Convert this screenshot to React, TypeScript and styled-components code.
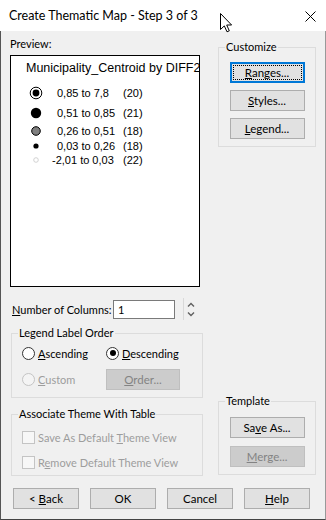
import styled, { createGlobalStyle, css } from "styled-components";

const GlobalStyle = createGlobalStyle`
  html, body {
    margin: 0;
    padding: 0;
    background: #f0f0f0;
  }
  body {
    width: 326px;
    height: 520px;
    overflow: hidden;
    font-family: Lato, "Liberation Sans", sans-serif;
    font-size: 11px;
    color: #000;
  }
  * {
    box-sizing: border-box;
  }
`;

const Window = styled.div`
  width: 326px;
  height: 520px;
  display: flex;
  flex-direction: column;
`;

const TitleBar = styled.div`
  position: relative;
  height: 31px;
  flex: none;
  display: flex;
  align-items: center;
  justify-content: space-between;
  padding: 0 10px 0 9px;
  background: #fff;
`;

const Title = styled.div`
  font-size: 12.5px;
  color: #000;
`;

const CloseIcon = styled.svg`
  width: 11px;
  height: 11px;
  margin-top: 1px;
`;

const Cursor = styled.svg`
  position: absolute;
  left: 220px;
  top: 13px;
  width: 13px;
  height: 20px;
`;

const Body = styled.div`
  flex: 1;
  display: flex;
  flex-direction: column;
  padding: 0 9px;
  background: #f0f0f0;
  border-left: 1px solid #555;
  border-right: 1px solid #999;
  border-bottom: 1px solid #444;
`;

const Main = styled.div`
  display: flex;
  gap: 14px;
`;

const LeftColumn = styled.div`
  width: 193px;
  display: flex;
  flex-direction: column;
`;

const RightColumn = styled.div`
  width: 99px;
  display: flex;
  flex-direction: column;
  justify-content: space-between;
  padding-bottom: 1px;
`;

const FieldLabel = styled.div`
  margin-top: 6px;
  line-height: 14px;
  height: 14px;
`;

const PreviewBox = styled.div`
  margin-top: 4px;
  width: 190px;
  height: 232px;
  background: #fff;
  border: 1px solid #000;
  overflow: hidden;
  padding: 5px 0 0 15px;
  font-family: "Liberation Sans", Arial, sans-serif;
`;

const PreviewTitle = styled.div`
  font-size: 12.5px;
  line-height: 14px;
  white-space: nowrap;
  margin-bottom: 7px;
`;

const LegendRow = styled.div<{ $h: number }>`
  height: ${(p) => p.$h}px;
  display: grid;
  grid-template-columns: 31px 66px auto;
  align-items: center;
  font-size: 11px;
  white-space: nowrap;
`;

const Symbol = styled.svg`
  width: 14px;
  height: 14px;
  margin-left: 3px;
`;

const RangeText = styled.span<{ $neg?: boolean }>`
  margin-left: ${(p) => (p.$neg ? "-5px" : "0")};
`;

const ColumnsRow = styled.div`
  margin-top: 11px;
  height: 22px;
  display: flex;
  align-items: center;
  padding-left: 2px;
`;

const ColumnsLabel = styled.label`
  width: 101px;
  flex: none;
  white-space: nowrap;
`;

const NumberInput = styled.div`
  width: 62px;
  height: 19px;
  flex: none;
  background: #fff;
  border: 1px solid #7a7a7a;
  padding-left: 4px;
  line-height: 17px;
`;

const Spinner = styled.div`
  margin-left: 8px;
  height: 22px;
  display: flex;
  align-items: center;
  border-left: 1px solid #d9d9d9;
  padding-left: 3px;
`;

const Group = styled.fieldset<{ $h: number; $mt: number }>`
  margin: ${(p) => p.$mt}px 0 0 1px;
  padding: 0;
  height: ${(p) => p.$h}px;
  border: 1px solid #dcdcdc;
  min-width: 0;
`;

const GroupLegend = styled.legend`
  margin-left: 6px;
  padding: 0 1px;
  line-height: 14px;
`;

const GroupBody = styled.div<{ $pt: number; $gap: number; $center?: boolean }>`
  display: flex;
  flex-direction: column;
  gap: ${(p) => p.$gap}px;
  padding: ${(p) => p.$pt}px 0 0 10px;
  ${(p) =>
    p.$center &&
    css`
      align-items: center;
      padding-left: 0;
    `}
`;

const OptionRow = styled.div`
  display: flex;
  align-items: center;
  height: 20px;
`;

const OptionCell = styled.label<{ $w?: number; $disabled?: boolean }>`
  display: flex;
  align-items: center;
  gap: 3px;
  width: ${(p) => (p.$w ? `${p.$w}px` : "auto")};
  color: ${(p) => (p.$disabled ? "#9d9d9d" : "#000")};
`;

const Radio = styled.span<{ $checked?: boolean; $disabled?: boolean }>`
  position: relative;
  width: 13px;
  height: 13px;
  border-radius: 50%;
  border: 1px solid ${(p) => (p.$disabled ? "#c4c4c4" : "#333")};
  background: ${(p) => (p.$disabled ? "#f4f4f4" : "#fff")};
  flex: none;
  ${(p) =>
    p.$checked &&
    css`
      &::after {
        content: "";
        position: absolute;
        left: 2.5px;
        top: 2.5px;
        width: 6px;
        height: 6px;
        border-radius: 50%;
        background: #000;
      }
    `}
`;

const Checkbox = styled.span`
  width: 13px;
  height: 13px;
  border: 1px solid #c4c4c4;
  background: #f7f7f7;
  flex: none;
`;

const Button = styled.button<{ $w?: number; $focused?: boolean }>`
  position: relative;
  width: ${(p) => p.$w ?? 75}px;
  height: 21px;
  padding: 0;
  font-family: inherit;
  font-size: 11.5px;
  color: #000;
  background: #e1e1e1;
  border: 1px solid #adadad;
  line-height: 19px;
  &:disabled {
    background: #cccccc;
    border-color: #bfbfbf;
    color: #838383;
  }
  ${(p) =>
    p.$focused &&
    css`
      border: 2px solid #0078d7;
      line-height: 17px;
      &::after {
        content: "";
        position: absolute;
        inset: 1px;
        border: 1px dotted #000;
      }
    `}
`;

const OrderButton = styled(Button)`
  margin-left: 22px;
`;

const ButtonBar = styled.div`
  margin-top: 12px;
  padding: 0 6px 0 3px;
  display: flex;
  justify-content: space-between;
`;

const legendRows = [
  { range: "0,85 to 7,8", count: "(20)", h: 22, kind: "ring" },
  { range: "0,51 to 0,85", count: "(21)", h: 18, kind: "big" },
  { range: "0,26 to 0,51", count: "(18)", h: 17, kind: "grey" },
  { range: "0,03 to 0,26", count: "(18)", h: 13, kind: "dot" },
  { range: "-2,01 to 0,03", count: "(22)", h: 16, kind: "empty", neg: true },
];

function LegendSymbol({ kind }: { kind: string }) {
  return (
    <Symbol viewBox="0 0 14 14">
      {kind === "ring" && (
        <>
          <circle cx="7" cy="7" r="5.8" fill="#fff" stroke="#000" strokeWidth="1" />
          <circle cx="7" cy="7" r="3.4" fill="#000" />
        </>
      )}
      {kind === "big" && <circle cx="7" cy="7" r="5.2" fill="#000" />}
      {kind === "grey" && (
        <circle cx="7" cy="7" r="4.3" fill="#7f7f7f" stroke="#000" strokeWidth="1" />
      )}
      {kind === "dot" && <circle cx="7" cy="7" r="2.6" fill="#000" />}
      {kind === "empty" && (
        <circle cx="7" cy="7" r="2.3" fill="#fff" stroke="#c8c8c8" strokeWidth="0.8" />
      )}
    </Symbol>
  );
}

export default function App() {
  return (
    <>
      <GlobalStyle />
      <Window>
        <TitleBar>
          <Title>Create Thematic Map - Step 3 of 3</Title>
          <CloseIcon viewBox="0 0 11 11">
            <path d="M0.5 0.5 L10.5 10.5 M10.5 0.5 L0.5 10.5" stroke="#000" strokeWidth="1" />
          </CloseIcon>
          <Cursor viewBox="0 0 13 20">
            <path
              d="M0.5 0.5 L0.5 16.5 L4.3 12.9 L7 18.8 L9.3 17.8 L6.7 12 L11.6 12 Z"
              fill="#fff"
              stroke="#000"
              strokeWidth="1"
              strokeLinejoin="round"
            />
          </Cursor>
        </TitleBar>
        <Body>
          <Main>
            <LeftColumn>
              <FieldLabel>Preview:</FieldLabel>
              <PreviewBox>
                <PreviewTitle>Municipality_Centroid by DIFF2</PreviewTitle>
                {legendRows.map((r) => (
                  <LegendRow key={r.range} $h={r.h}>
                    <LegendSymbol kind={r.kind} />
                    <RangeText $neg={r.neg}>{r.range}</RangeText>
                    <span>{r.count}</span>
                  </LegendRow>
                ))}
              </PreviewBox>
              <ColumnsRow>
                <ColumnsLabel>
                  <u>N</u>umber of Columns:
                </ColumnsLabel>
                <NumberInput>1</NumberInput>
                <Spinner>
                  <svg width="8" height="17" viewBox="0 0 8 17">
                    <path d="M1 5.5 L4 2.5 L7 5.5" fill="none" stroke="#606060" strokeWidth="1.4" />
                    <path d="M1 11.5 L4 14.5 L7 11.5" fill="none" stroke="#606060" strokeWidth="1.4" />
                  </svg>
                </Spinner>
              </ColumnsRow>
              <Group $h={72} $mt={6}>
                <GroupLegend>Legend Label Order</GroupLegend>
                <GroupBody $pt={3} $gap={6}>
                  <OptionRow>
                    <OptionCell $w={84}>
                      <Radio />
                      <span>
                        <u>A</u>scending
                      </span>
                    </OptionCell>
                    <OptionCell>
                      <Radio $checked />
                      <span>
                        <u>D</u>escending
                      </span>
                    </OptionCell>
                  </OptionRow>
                  <OptionRow>
                    <OptionCell $w={62} $disabled>
                      <Radio $disabled />
                      <span>
                        <u>C</u>ustom
                      </span>
                    </OptionCell>
                    <OrderButton $w={74} disabled>
                      <u>O</u>rder...
                    </OrderButton>
                  </OptionRow>
                </GroupBody>
              </Group>
              <Group $h={69} $mt={9}>
                <GroupLegend>Associate Theme With Table</GroupLegend>
                <GroupBody $pt={6} $gap={5}>
                  <OptionRow>
                    <OptionCell $disabled>
                      <Checkbox />
                      <span>
                        Save As Default <u>T</u>heme View
                      </span>
                    </OptionCell>
                  </OptionRow>
                  <OptionRow>
                    <OptionCell $disabled>
                      <Checkbox />
                      <span>
                        R<u>e</u>move Default Theme View
                      </span>
                    </OptionCell>
                  </OptionRow>
                </GroupBody>
              </Group>
            </LeftColumn>
            <RightColumn>
              <Group $h={107} $mt={9}>
                <GroupLegend>Customize</GroupLegend>
                <GroupBody $pt={8} $gap={7} $center>
                  <Button $focused>
                    <u>R</u>anges...
                  </Button>
                  <Button>
                    <u>S</u>tyles...
                  </Button>
                  <Button>
                    <u>L</u>egend...
                  </Button>
                </GroupBody>
              </Group>
              <Group $h={81} $mt={0}>
                <GroupLegend>Template</GroupLegend>
                <GroupBody $pt={9} $gap={8} $center>
                  <Button>
                    Sa<u>v</u>e As...
                  </Button>
                  <Button disabled>
                    <u>M</u>erge...
                  </Button>
                </GroupBody>
              </Group>
            </RightColumn>
          </Main>
          <ButtonBar>
            <Button $w={66}>
              &lt; <u>B</u>ack
            </Button>
            <Button $w={66}>OK</Button>
            <Button $w={66}>Cancel</Button>
            <Button $w={66}>
              <u>H</u>elp
            </Button>
          </ButtonBar>
        </Body>
      </Window>
    </>
  );
}
